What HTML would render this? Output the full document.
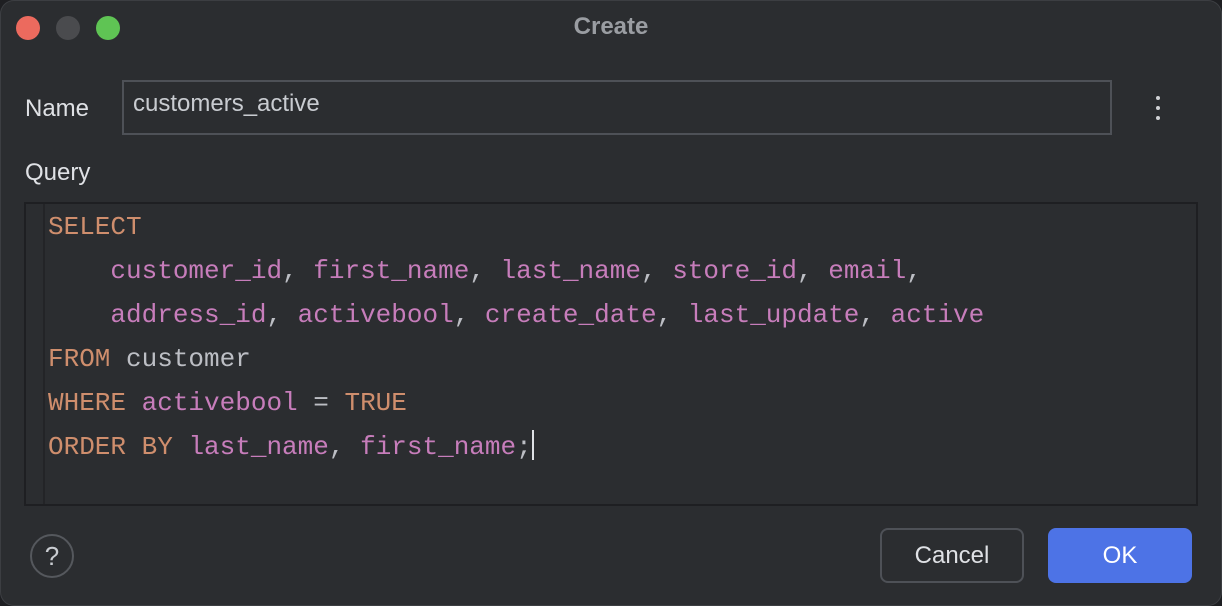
<!DOCTYPE html>
<html><head><style>
html,body{margin:0;padding:0;background:#1e1f22;}
body{width:1222px;height:606px;position:relative;overflow:hidden;font-family:"Liberation Sans",sans-serif;}
.win{position:absolute;left:0;top:0;width:1222px;height:606px;background:#2b2d30;border-radius:14px;box-shadow:inset 0 0 0 1px #3c3e42;}
.dot{position:absolute;top:16px;width:24px;height:24px;border-radius:50%;}
.title{position:absolute;top:13px;left:0;width:1222px;text-align:center;color:#9a9da2;font-weight:bold;font-size:24px;}
.lbl{position:absolute;color:#dfe1e5;font-size:24px;}
.input{position:absolute;left:122px;top:80px;width:990px;height:55px;box-sizing:border-box;border:2px solid #4e5157;color:#c9ccd1;font-size:24px;padding:8px 0 0 9px;}
.kd{position:absolute;left:1156px;width:4px;height:4px;border-radius:50%;background:#cfd1d4;}
.ed{position:absolute;left:24px;top:202px;width:1174px;height:304px;box-sizing:border-box;border:2px solid #1e1f22;background:#2b2d30;}
.gut{position:absolute;left:17px;top:0;width:2px;height:300px;background:#232427;}
.code{position:absolute;left:22px;top:1px;font-family:"Liberation Mono",monospace;font-size:26px;line-height:44px;white-space:pre;color:#bcbec4;}
.k{color:#cf8e6d}.i{color:#c77dbb}
.cur{display:inline-block;width:2px;height:30px;background:#dfe1e5;vertical-align:-6px;}
.help{position:absolute;left:30px;top:534px;width:44px;height:44px;border-radius:50%;border:2px solid #55585d;box-sizing:border-box;color:#c9ccd1;font-size:26px;text-align:center;line-height:40px;}
.btn{position:absolute;top:528px;width:144px;height:55px;border-radius:8px;box-sizing:border-box;font-size:24px;text-align:center;line-height:55px;}
</style></head><body>
<div class="win">
<div class="dot" style="left:16px;background:#ec6a5e"></div>
<div class="dot" style="left:56px;background:#4a4b4e"></div>
<div class="dot" style="left:96px;background:#5fc454"></div>
<div class="title">Create</div>
<div class="lbl" style="left:25px;top:95px">Name</div>
<div class="input">customers_active</div>
<div class="kd" style="top:96px"></div><div class="kd" style="top:106px"></div><div class="kd" style="top:116px"></div>
<div class="lbl" style="left:25px;top:159px">Query</div>
<div class="ed"><div class="gut"></div>
<div class="code"><span class="k">SELECT</span>
    <span class="i">customer_id</span>, <span class="i">first_name</span>, <span class="i">last_name</span>, <span class="i">store_id</span>, <span class="i">email</span>,
    <span class="i">address_id</span>, <span class="i">activebool</span>, <span class="i">create_date</span>, <span class="i">last_update</span>, <span class="i">active</span>
<span class="k">FROM</span> customer
<span class="k">WHERE</span> <span class="i">activebool</span> = <span class="k">TRUE</span>
<span class="k">ORDER BY</span> <span class="i">last_name</span>, <span class="i">first_name</span>;<span class="cur"></span></div>
</div>
<div class="help">?</div>
<div class="btn" style="left:880px;border:2px solid #4e5157;color:#dfe1e5;line-height:51px;">Cancel</div>
<div class="btn" style="left:1048px;background:#4d73e6;color:#fff;">OK</div>
</div>
</body></html>
